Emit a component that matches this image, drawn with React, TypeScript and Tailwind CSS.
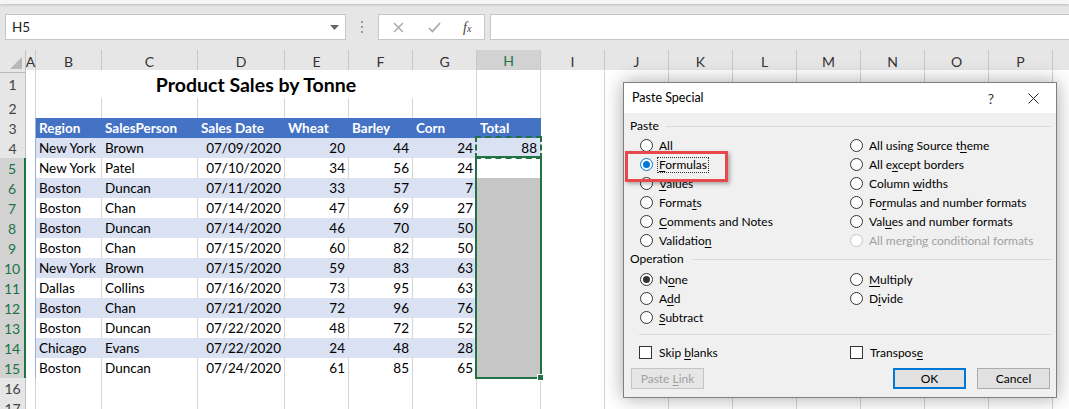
import React from "react";

const GRID =
  "grid grid-cols-[26px_10px_66px_96px_87px_64px_64px_64px_64px_64px_64px_64px_64px_64px_64px_64px_64px_64px]";

const letters = ["A", "B", "C", "D", "E", "F", "G", "H", "I", "J", "K", "L", "M", "N", "O", "P", ""];

const heads = ["Region", "SalesPerson", "Sales Date", "Wheat", "Barley", "Corn", "Total"];

const sales: [string, string, string, number, number, number][] = [
  ["New York", "Brown", "07/09/2020", 20, 44, 24],
  ["New York", "Patel", "07/10/2020", 34, 56, 24],
  ["Boston", "Duncan", "07/11/2020", 33, 57, 7],
  ["Boston", "Chan", "07/14/2020", 47, 69, 27],
  ["Boston", "Duncan", "07/14/2020", 46, 70, 50],
  ["Boston", "Chan", "07/15/2020", 60, 82, 50],
  ["New York", "Brown", "07/15/2020", 59, 83, 63],
  ["Dallas", "Collins", "07/16/2020", 73, 95, 63],
  ["Boston", "Chan", "07/21/2020", 72, 96, 76],
  ["Boston", "Duncan", "07/22/2020", 48, 72, 52],
  ["Chicago", "Evans", "07/22/2020", 24, 48, 28],
  ["Boston", "Duncan", "07/24/2020", 61, 85, 65],
];

function cellCls(r: number, c: number) {
  const inTable = r >= 3 && r <= 15 && c >= 1 && c <= 7;
  if (c === 0 && r >= 3 && r <= 15) return "bg-white border-r-[#9bb1dc] border-b-[#d4d4d4]";
  if (!inTable) return "bg-white border-r-[#d4d4d4] border-b-[#d4d4d4]";
  if (r === 3) return "bg-[#4472c4] border-r-[#4472c4] border-b-[#9bb1dc] text-white font-bold";
  if (c === 7) {
    if (r === 4) return "bg-[#d9e1f2] border-r-[#d4d4d4] border-b-[#9bb1dc]";
    if (r === 5) return "bg-white border-r-[#d4d4d4] border-b-[#a8a8a8]";
    return "bg-[#c6c6c6] border-r-[#c6c6c6] border-b-[#a8a8a8]";
  }
  if (r % 2 === 0) return "bg-[#d9e1f2] border-r-[#d9e1f2] border-b-[#9bb1dc]";
  return "bg-white border-r-[#d4d4d4] border-b-[#9bb1dc]";
}

function cellText(r: number, c: number): { v: string; right?: boolean } {
  if (r === 3 && c >= 1 && c <= 7) return { v: heads[c - 1] };
  if (r >= 4 && r <= 15) {
    const row = sales[r - 4];
    if (c === 1 || c === 2) return { v: row[c - 1] as string };
    if (c >= 3 && c <= 5) return { v: String(row[c - 1]), right: true };
    if (c === 6) return { v: String(row[5]), right: true };
    if (c === 7 && r === 4) return { v: "88", right: true };
  }
  return { v: "" };
}

function RowHead({ n }: { n: number }) {
  const sel = n >= 5 && n <= 15;
  return (
    <div
      className={
        "flex items-center justify-center border-b border-b-[#cfcfcf] text-[14px] " +
        (sel
          ? "bg-[#d2d2d2] text-[#217346] border-r-2 border-r-[#217346]"
          : "bg-[#e6e6e6] text-[#444] border-r border-r-[#c2c2c2]")
      }
    >
      {n}
    </div>
  );
}

function Cell({ r, c }: { r: number; c: number }) {
  const t = cellText(r, c);
  return (
    <div
      className={
        "flex items-center overflow-hidden whitespace-nowrap border-r border-b px-[3px] text-[13.5px] " +
        (t.right ? "justify-end " : "") +
        cellCls(r, c)
      }
    >
      {t.v}
    </div>
  );
}

function Sheet() {
  const rowNums = [2, 3, 4, 5, 6, 7, 8, 9, 10, 11, 12, 13, 14, 15, 16, 17];
  return (
    <div className="relative font-['Lato',sans-serif] text-black">
      {/* column headers */}
      <div className={GRID + " h-[20px]"}>
        <div className="relative border-r border-r-[#c2c2c2] border-b border-b-[#b8b8b8] bg-[#e6e6e6]">
          <svg className="absolute bottom-[3px] right-[3px]" width="12" height="12" viewBox="0 0 12 12">
            <polygon points="12,0 12,12 0,12" fill="#b8b8b8" />
          </svg>
        </div>
        {letters.map((l, i) =>
          l === "H" ? (
            <div
              key={i}
              className="flex items-center justify-center border-r border-r-[#c8c8c8] border-b-2 border-b-[#217346] bg-[#d2d2d2] text-[14px] text-[#217346]"
            >
              {l}
            </div>
          ) : (
            <div
              key={i}
              className="flex items-center justify-center border-r border-r-[#c8c8c8] border-b border-b-[#b8b8b8] bg-[#e6e6e6] text-[14px] text-[#333]"
            >
              {l}
            </div>
          )
        )}
      </div>

      {/* row 1 with merged title */}
      <div className={GRID + " h-[28px]"}>
        <RowHead n={1} />
        <Cell r={1} c={0} />
        <div className="col-span-6 flex items-center justify-center border-r border-r-[#d4d4d4] border-b border-b-[#d4d4d4] bg-white text-[19.5px] font-bold">
          Product Sales by Tonne
        </div>
        {letters.slice(7).map((l, i) => (
          <Cell key={i} r={1} c={i + 7} />
        ))}
      </div>

      {rowNums.map((r) => (
        <div key={r} className={GRID + " h-[20px]"}>
          <RowHead n={r} />
          {letters.map((l, c) => (
            <Cell key={c} r={r} c={c} />
          ))}
        </div>
      ))}

      {/* copy marquee around H4 */}
      <div className="absolute left-[475px] top-[86px] h-[23px] w-[67px] border-2 border-dashed border-[#217346]" />
      {/* selection H5:H15 */}
      <div className="absolute left-[475px] top-[106px] h-[223px] w-[67px] border-2 border-[#217346]" />
      <div className="absolute left-[537px] top-[324px] h-[7px] w-[7px] border border-white bg-[#217346]" />
    </div>
  );
}

function FormulaBar() {
  return (
    <div className="flex h-[46px] items-start pt-[10px] font-['Lato',sans-serif]">
      <div className="ml-[5px] flex h-[26px] w-[341px] items-center justify-between border border-[#c6c6c6] bg-white pl-[6px] pr-[6px] text-[13.5px] text-[#222]">
        <span>H5</span>
        <svg width="9" height="5" viewBox="0 0 9 5">
          <polygon points="0,0 9,0 4.5,5" fill="#666" />
        </svg>
      </div>
      <div className="flex h-[26px] w-[32px] flex-col items-center justify-center gap-[3px]">
        <span className="h-[2px] w-[2px] bg-[#9a9a9a]" />
        <span className="h-[2px] w-[2px] bg-[#9a9a9a]" />
        <span className="h-[2px] w-[2px] bg-[#9a9a9a]" />
      </div>
      <div className="flex h-[26px] w-[107px] items-center border border-[#c6c6c6] bg-white">
        <svg className="ml-[14px]" width="11" height="11" viewBox="0 0 11 11">
          <path d="M1 1 L10 10 M10 1 L1 10" stroke="#a6a6a6" strokeWidth="1.4" />
        </svg>
        <svg className="ml-[24px]" width="13" height="11" viewBox="0 0 13 11">
          <path d="M1 6 L4.5 9.5 L12 1" stroke="#a6a6a6" strokeWidth="1.6" fill="none" />
        </svg>
        <span className="ml-[22px] font-['Liberation_Serif',serif] text-[14px] italic text-[#444]">
          f<span className="text-[10px]">x</span>
        </span>
      </div>
      <div className="ml-[5px] h-[26px] flex-1 border border-r-0 border-[#c6c6c6] bg-white" />
    </div>
  );
}

function Label({ parts, disabled }: { parts: [string, string, string]; disabled?: boolean }) {
  return (
    <span className={disabled ? "text-[#a0a0a0]" : "text-black"}>
      {parts[0]}
      {parts[1] && <u className="underline underline-offset-2">{parts[1]}</u>}
      {parts[2]}
    </span>
  );
}

function Radio({
  parts,
  checked,
  blue,
  focus,
  disabled,
}: {
  parts: [string, string, string];
  checked?: boolean;
  blue?: boolean;
  focus?: boolean;
  disabled?: boolean;
}) {
  return (
    <div className="flex h-[19px] items-center">
      <span
        className={
          "flex h-[13px] w-[13px] items-center justify-center rounded-full border bg-white " +
          (disabled ? "border-[#c4c4c4]" : blue ? "border-[#0078d7]" : "border-[#333]")
        }
      >
        {checked && <span className={"h-[7px] w-[7px] rounded-full " + (blue ? "bg-[#0078d7]" : "bg-[#333]")} />}
      </span>
      {focus ? (
        <span className="ml-[4px] border border-dotted border-[#333] px-px leading-[14px]">
          <Label parts={parts} />
        </span>
      ) : (
        <span className="ml-[6px]">
          <Label parts={parts} disabled={disabled} />
        </span>
      )}
    </div>
  );
}

function Check({ parts }: { parts: [string, string, string] }) {
  return (
    <div className="flex h-[19px] items-center">
      <span className="h-[13px] w-[13px] border border-[#333] bg-white" />
      <span className="ml-[7px]">
        <Label parts={parts} />
      </span>
    </div>
  );
}

function Dialog() {
  return (
    <div className="absolute left-[623px] top-[82px] flex h-[316px] w-[434px] flex-col border border-[#7f7f7f] bg-[#f0f0f0] font-['Lato',sans-serif] text-[12px] text-black shadow-[0_0_18px_rgba(0,0,0,0.35)]">
      <div className="flex h-[30px] shrink-0 items-center bg-white pl-[8px] text-[12.5px]">
        <span>Paste Special</span>
        <span className="ml-auto mr-[34px] text-[14px] text-[#333]">?</span>
        <svg className="mr-[17px]" width="11" height="11" viewBox="0 0 11 11">
          <path d="M0.5 0.5 L10.5 10.5 M10.5 0.5 L0.5 10.5" stroke="#222" strokeWidth="1" />
        </svg>
      </div>

      <div className="flex flex-1 flex-col pl-[6px] pr-[5px]">
        <div className="mt-[5px] flex h-[16px] items-center">
          <span>Paste</span>
          <span className="ml-[7px] h-px flex-1 bg-[#dadada]" />
        </div>
        <div className="mt-[2px] grid grid-cols-[210px_1fr] pl-[10px]">
          <div className="flex flex-col">
            <Radio parts={["", "", "All"]} />
            <Radio parts={["", "F", "ormulas"]} checked blue focus />
            <Radio parts={["", "V", "alues"]} />
            <Radio parts={["Forma", "t", "s"]} />
            <Radio parts={["", "C", "omments and Notes"]} />
            <Radio parts={["Validatio", "n", ""]} />
          </div>
          <div className="flex flex-col">
            <Radio parts={["All using Source t", "h", "eme"]} />
            <Radio parts={["All e", "x", "cept borders"]} />
            <Radio parts={["Column ", "w", "idths"]} />
            <Radio parts={["Fo", "r", "mulas and number formats"]} />
            <Radio parts={["Val", "u", "es and number formats"]} />
            <Radio parts={["All mergin", "g", " conditional formats"]} disabled />
          </div>
        </div>

        <div className="flex h-[18px] items-center">
          <span>Operation</span>
          <span className="ml-[8px] h-px flex-1 bg-[#dadada]" />
        </div>
        <div className="mt-[2px] grid grid-cols-[210px_1fr] pl-[10px]">
          <div className="flex flex-col">
            <Radio parts={["N", "o", "ne"]} checked />
            <Radio parts={["A", "d", "d"]} />
            <Radio parts={["", "S", "ubtract"]} />
          </div>
          <div className="flex flex-col">
            <Radio parts={["", "M", "ultiply"]} />
            <Radio parts={["D", "i", "vide"]} />
          </div>
        </div>

        <div className="ml-[9px] mt-[7px] h-px bg-[#dadada]" />

        <div className="mt-[8px] grid grid-cols-[211px_1fr] pl-[9px]">
          <Check parts={["Skip ", "b", "lanks"]} />
          <Check parts={["Transpos", "e", ""]} />
        </div>

        <div className="mt-[6px] flex items-center pl-[1px]">
          <div className="flex h-[21px] w-[73px] items-center justify-center border border-[#c4c4c4] bg-[#e6e6e6] text-[#a0a0a0]">
            Paste <u className="ml-[3px] underline underline-offset-2">L</u>ink
          </div>
          <div className="ml-auto flex h-[21px] w-[73px] items-center justify-center border-2 border-[#0078d7] bg-[#e1e1e1]">
            OK
          </div>
          <div className="ml-[11px] mr-[1px] flex h-[21px] w-[73px] items-center justify-center border border-[#adadad] bg-[#e1e1e1]">
            Cancel
          </div>
        </div>
      </div>

      {/* red highlight around Formulas */}
      <div className="absolute left-[1px] top-[68px] h-[31px] w-[103px] border-[3px] border-[#e8474b] shadow-[2px_2px_4px_rgba(0,0,0,0.3)]" />
    </div>
  );
}

export default function App() {
  return (
    <div className="relative h-[409px] w-[1069px] overflow-hidden bg-[#e6e6e6]">
      <div className="h-[4px] bg-[#f5f5f5] shadow-[0_1px_3px_rgba(0,0,0,0.18)]" />
      <FormulaBar />
      <Sheet />
      <Dialog />
    </div>
  );
}
